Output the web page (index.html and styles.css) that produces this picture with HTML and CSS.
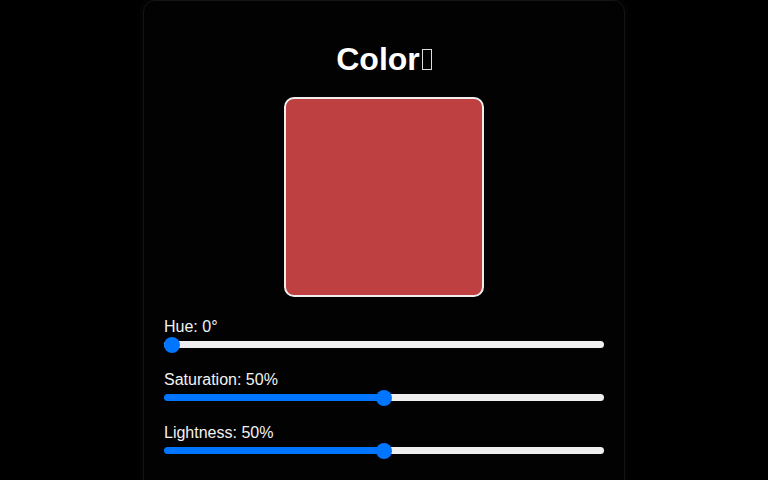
FILE: index.html
```html
<!DOCTYPE html>
<html lang="en">
<head>
    <meta charset="UTF-8">
    <meta name="viewport" content="width=device-width, initial-scale=1.0">
    <title>Color Picker</title>
    <link rel="stylesheet" href="styles.css">
</head>
<body>
    <div class="container">
        <h1>Color<span class="tofu"></span></h1>
        <div class="swatch" id="swatch"></div>
        <div class="controls">
            <div class="control">
                <label for="hue">Hue: <span id="hue-value">0</span>°</label>
                <input type="range" id="hue" min="0" max="360" value="0">
            </div>
            <div class="control">
                <label for="saturation">Saturation: <span id="saturation-value">50</span>%</label>
                <input type="range" id="saturation" min="0" max="100" value="50">
            </div>
            <div class="control">
                <label for="lightness">Lightness: <span id="lightness-value">50</span>%</label>
                <input type="range" id="lightness" min="0" max="100" value="50">
            </div>
        </div>
    </div>
    <script>
        const swatch = document.getElementById('swatch');
        const hue = document.getElementById('hue');
        const saturation = document.getElementById('saturation');
        const lightness = document.getElementById('lightness');

        function fillSlider(slider) {
            const pct = (slider.value - slider.min) / (slider.max - slider.min) * 100;
            slider.style.background = `linear-gradient(to right, #0075ff ${pct}%, #efefef ${pct}%)`;
        }

        function updateColor() {
            const h = hue.value;
            const s = saturation.value;
            const l = lightness.value;
            swatch.style.backgroundColor = `hsl(${h}, ${s}%, ${l}%)`;
            document.getElementById('hue-value').textContent = h;
            document.getElementById('saturation-value').textContent = s;
            document.getElementById('lightness-value').textContent = l;
            [hue, saturation, lightness].forEach(fillSlider);
        }

        hue.addEventListener('input', updateColor);
        saturation.addEventListener('input', updateColor);
        lightness.addEventListener('input', updateColor);
        updateColor();
    </script>
</body>
</html>
```
FILE: styles.css
```css
body {
    font-family: "Liberation Sans", Arial, sans-serif;
    margin: 0;
    background-color: #000;
    color: #fff;
}

.container {
    width: 440px;
    margin: 0 auto;
    padding: 20px;
    background: #020202;
    border: 1px solid #141414;
    border-radius: 12px;
    box-shadow: 0 0 8px rgba(255, 255, 255, 0.04);
    text-align: center;
}

h1 {
    font-size: 32px;
    margin: 20px 0 19px;
}

/* empty glyph box after the title */
.tofu {
    display: inline-block;
    width: 8px;
    height: 19px;
    margin-left: 2px;
    border: 1px solid #ddd;
}

.swatch {
    width: 196px;
    height: 196px;
    margin: 0 auto;
    border: 2px solid #eee;
    border-radius: 10px;
}

.controls {
    margin-top: 21px;
    text-align: left;
}

.control {
    margin-bottom: 23px;
}

.control label {
    display: block;
    font-size: 16px;
    color: #f2f2f2;
}

.control input[type="range"] {
    -webkit-appearance: none;
    appearance: none;
    display: block;
    width: 100%;
    height: 7px;
    margin: 5px 0 4px;
    border-radius: 4px;
    background: #efefef;
    outline: none;
}

.control input[type="range"]::-webkit-slider-thumb {
    -webkit-appearance: none;
    width: 16px;
    height: 16px;
    border-radius: 50%;
    background: #0075ff;
    cursor: pointer;
}
```
